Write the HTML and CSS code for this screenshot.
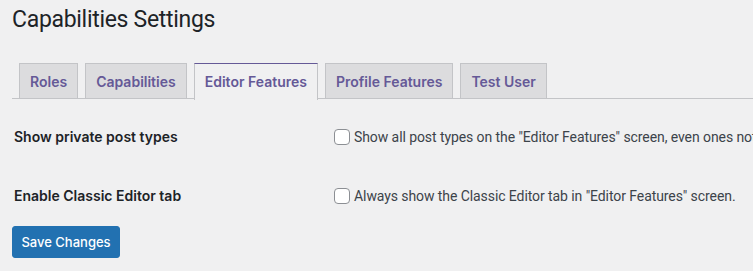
FILE: index.html
```html
<!DOCTYPE html>
<html>
<head>
<meta charset="utf-8">
<link rel="stylesheet" href="styles.css">
</head>
<body>
<div class="wrap">
  <h1 class="title">Capabilities Settings</h1>
  <nav class="tabs">
    <a class="tab">Roles</a>
    <a class="tab">Capabilities</a>
    <a class="tab active">Editor Features</a>
    <a class="tab">Profile Features</a>
    <a class="tab">Test User</a>
  </nav>
  <div class="form">
    <div class="row">
      <div class="label">Show private post types</div>
      <label class="field"><span class="check"></span><span class="desc">Show all post types on the "Editor Features" screen, even ones not public.</span></label>
    </div>
    <div class="row">
      <div class="label">Enable Classic Editor tab</div>
      <label class="field"><span class="check"></span><span class="desc">Always show the Classic Editor tab in "Editor Features" screen.</span></label>
    </div>
  </div>
  <button class="save">Save Changes</button>
</div>
</body>
</html>
```
FILE: styles.css
```css
html, body {
  margin: 0;
  padding: 0;
  background: #f0f0f1;
  overflow: hidden;
}
body {
  font-family: Inter, "Liberation Sans", sans-serif;
  color: #1d2327;
  width: 753px;
  height: 271px;
}
.wrap {
  padding-left: 12px;
}
.title {
  margin: 0;
  padding-top: 5px;
  font-family: Roboto, "Liberation Sans", sans-serif;
  font-size: 23px;
  font-weight: 400;
  line-height: 30px;
  letter-spacing: -0.3px;
  color: #1d2327;
  height: 58px;
}
.tabs {
  display: flex;
  border-bottom: 1px solid #c3c4c7;
  height: 35px;
  white-space: nowrap;
}
.tab {
  display: block;
  margin-left: 7px;
  padding: 6px 10px 4px;
  font-size: 14px;
  font-weight: 600;
  line-height: 24px;
  color: #655997;
  background: #dcdcde;
  border: 1px solid #c3c4c7;
  border-bottom: none;
}
.tab.active {
  background: #f0f0f1;
  border-top-color: #655997;
  height: 25px;
  padding-bottom: 5px;
  margin-bottom: -1px;
}
.form {
  padding-top: 8px;
}
.row {
  display: flex;
  align-items: center;
  height: 59px;
  white-space: nowrap;
}
.label {
  flex: 0 0 320px;
  padding-left: 2px;
  font-size: 14px;
  font-weight: 600;
  color: #1d2327;
}
.field {
  display: flex;
  align-items: center;
  gap: 4px;
  min-width: 0;
  overflow: hidden;
  font-family: Roboto, "Liberation Sans", sans-serif;
  font-size: 14px;
  letter-spacing: -0.08px;
  color: #3c434a;
}
.check {
  display: block;
  width: 14px;
  height: 14px;
  border: 1px solid #8c8f94;
  border-radius: 4px;
  background: #fff;
  flex-shrink: 0;
}
.save {
  display: block;
  margin-top: 1px;
  width: 108px;
  height: 32px;
  padding: 0;
  background: #2271b1;
  color: #fff;
  border: 1px solid #2271b1;
  border-radius: 3px;
  font-family: inherit;
  font-size: 13px;
  font-weight: 500;
}
```
